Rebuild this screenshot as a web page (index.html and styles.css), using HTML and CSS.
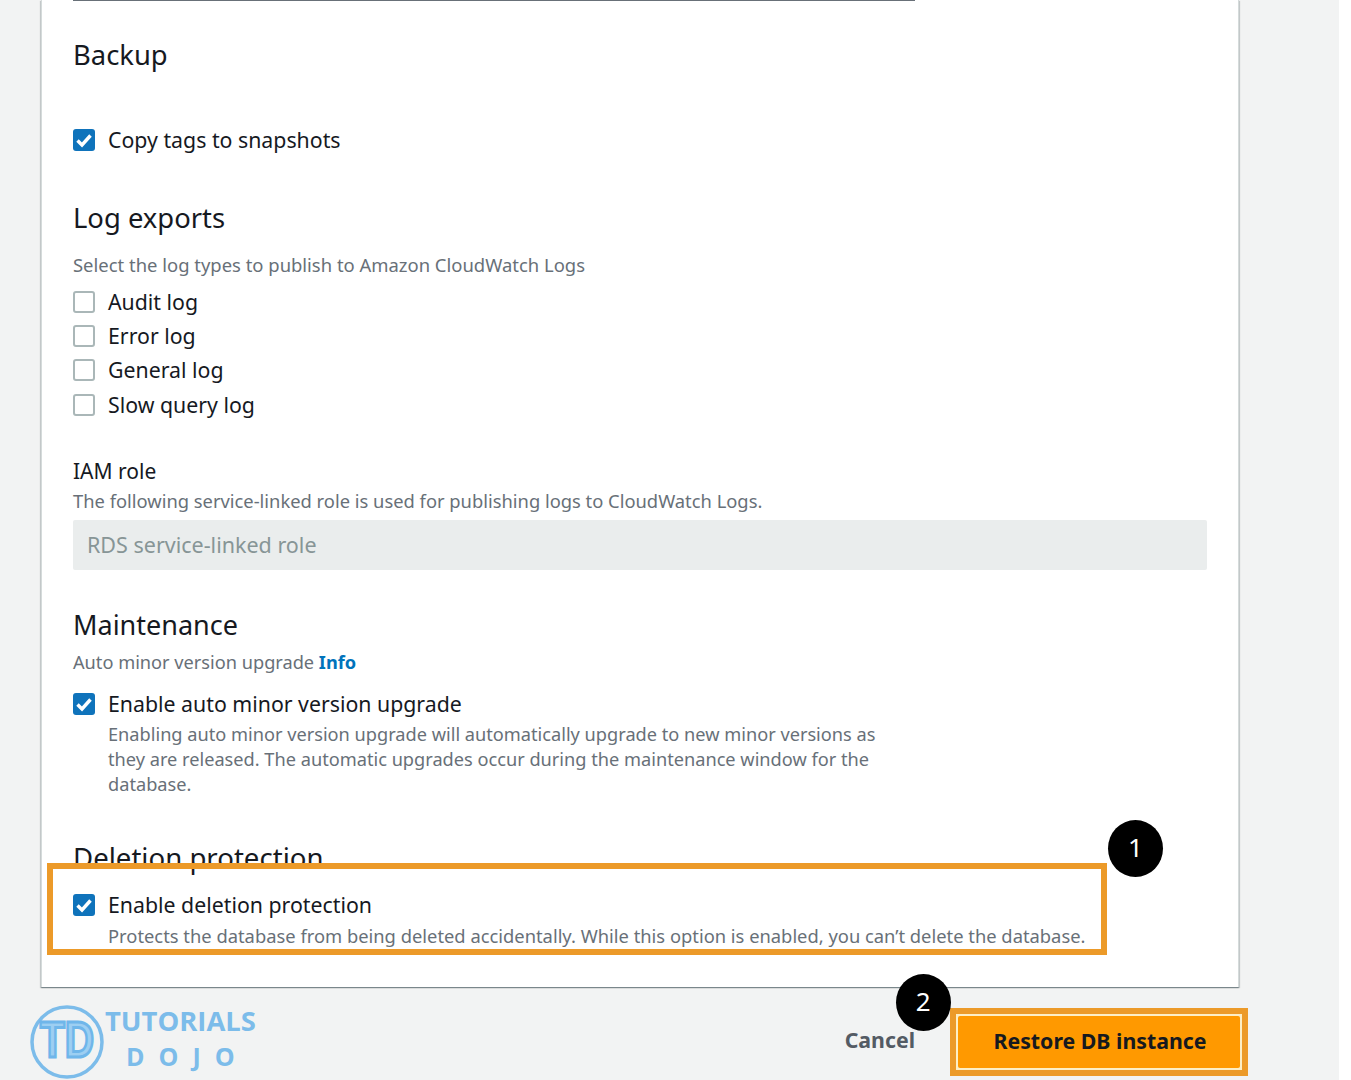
FILE: index.html
```html
<!DOCTYPE html>
<html>
<head>
    <title>Restore DB instance</title>
    <link rel="stylesheet" href="styles.css">
</head>
<body>
    <div class="page">
        <div class="card">
            <div class="top-rule"></div>

            <h2 class="heading heading-backup">Backup</h2>
            <label class="check check-copy">
                <svg class="box" viewBox="0 0 22 22"><rect width="22" height="22" rx="3" fill="#0f73bb"/><path d="M4.5 11.5l4.5 4.5L17.5 6.5" fill="none" stroke="#fff" stroke-width="3.4"/></svg>
                <span>Copy tags to snapshots</span>
            </label>

            <h2 class="heading heading-logs">Log exports</h2>
            <p class="hint hint-logs">Select the log types to publish to Amazon CloudWatch Logs</p>
            <div class="log-list">
                <label class="check"><span class="box empty"></span><span>Audit log</span></label>
                <label class="check"><span class="box empty"></span><span>Error log</span></label>
                <label class="check"><span class="box empty"></span><span>General log</span></label>
                <label class="check"><span class="box empty"></span><span>Slow query log</span></label>
            </div>

            <div class="field-label">IAM role</div>
            <p class="hint hint-role">The following service-linked role is used for publishing logs to CloudWatch Logs.</p>
            <div class="disabled-input">RDS service-linked role</div>

            <h2 class="heading heading-maint">Maintenance</h2>
            <p class="hint hint-maint">Auto minor version upgrade <a class="info" href="#">Info</a></p>
            <label class="check check-auto">
                <svg class="box" viewBox="0 0 22 22"><rect width="22" height="22" rx="3" fill="#0f73bb"/><path d="M4.5 11.5l4.5 4.5L17.5 6.5" fill="none" stroke="#fff" stroke-width="3.4"/></svg>
                <span>Enable auto minor version upgrade</span>
            </label>
            <p class="hint check-note note-auto">Enabling auto minor version upgrade will automatically upgrade to new minor versions as they are released. The automatic upgrades occur during the maintenance window for the database.</p>

            <h2 class="heading heading-delete">Deletion protection</h2>
            <label class="check check-delete">
                <svg class="box" viewBox="0 0 22 22"><rect width="22" height="22" rx="3" fill="#0f73bb"/><path d="M4.5 11.5l4.5 4.5L17.5 6.5" fill="none" stroke="#fff" stroke-width="3.4"/></svg>
                <span>Enable deletion protection</span>
            </label>
            <p class="hint check-note note-delete">Protects the database from being deleted accidentally. While this option is enabled, you can’t delete the database.</p>

            <div class="highlight highlight-delete"></div>
            <div class="step step-one">1</div>
        </div>

        <div class="footer">
            <svg class="logo" width="240" height="79" viewBox="0 0 240 79">
                <circle cx="37" cy="41" r="35" fill="none" stroke="#7cbcea" stroke-width="3.5"/>
                <text class="logo-td" x="37" y="56" text-anchor="middle" textLength="54" lengthAdjust="spacingAndGlyphs">TD</text>
                <text class="logo-top" x="75" y="30">TUTORIALS</text>
                <text class="logo-bottom" x="96" y="65">DOJO</text>
            </svg>
            <div class="actions">
                <a class="cancel" href="#">Cancel</a>
                <div class="restore-wrap">
                    <button class="restore" type="button">Restore DB instance</button>
                </div>
                <div class="step step-two">2</div>
            </div>
        </div>
    </div>
</body>
</html>
```

FILE: styles.css
```css
html, body {
    margin: 0;
    padding: 0;
    background: #fff;
}
body {
    font-family: "Noto Sans", Arial, sans-serif;
    color: #16191f;
    height: 1080px;
    overflow: hidden;
}
.page {
    width: 1339px;
    height: 1080px;
    background: #f2f3f3;
    padding-left: 41px;
    box-sizing: border-box;
}
.card {
    position: relative;
    width: 1198px;
    height: 987px;
    box-sizing: border-box;
    padding: 0 31px;
    background: #fff;
    border-left: 1px solid #d5dbdb;
    border-right: 1px solid #d5dbdb;
    box-shadow: 0 1px 1px 0 rgba(0, 28, 36, .3), 1px 1px 1px 0 rgba(0, 28, 36, .15), -1px 1px 1px 0 rgba(0, 28, 36, .15);
}
.top-rule {
    width: 842px;
    height: 1px;
    background: #687078;
}
.heading {
    margin: 0;
    font-size: 27.4px;
    font-weight: 400;
    line-height: 34px;
    color: #16191f;
}
.heading-backup { margin-top: 37px; }
.heading-logs { margin-top: 44px; }
.heading-maint {
    margin-top: 38px;
    font-size: 27px;
}
.heading-delete {
    margin-top: 43px;
    font-size: 27.6px;
}
.hint {
    margin: 0;
    font-size: 18.35px;
    line-height: 25px;
    color: #687078;
}
.check {
    display: flex;
    align-items: center;
    gap: 13px;
    font-size: 21.3px;
    line-height: 34px;
    height: 34.4px;
    color: #16191f;
}
.box {
    flex: none;
    display: block;
    width: 22px;
    height: 22px;
    box-sizing: border-box;
}
.box.empty {
    background: #fff;
    border: 2px solid #aab7b8;
    border-radius: 3px;
}
.check-copy { margin-top: 51px; }
.hint-logs {
    margin-top: 17px;
    font-size: 18.45px;
}
.log-list { margin-top: 7px; }
.field-label {
    margin-top: 34px;
    font-size: 21px;
    line-height: 30px;
}
.hint-role { margin-top: 2px; }
.disabled-input {
    margin-top: 7px;
    height: 50px;
    padding-left: 14px;
    background: #eaeded;
    border-radius: 2px;
    font-size: 21.5px;
    line-height: 50px;
    color: #879596;
}
.hint-maint {
    margin-top: 8px;
    font-size: 18.2px;
}
.info {
    color: #0073bb;
    font-weight: 700;
    text-decoration: none;
}
.check-auto { margin-top: 12px; }
.check-note {
    margin-left: 35px;
    max-width: 790px;
}
.note-auto {
    margin-top: 1px;
    font-size: 18.2px;
}
.check-delete { margin-top: 13px; }
.note-delete {
    max-width: none;
    margin-top: 1px;
}
.highlight {
    position: absolute;
    box-sizing: border-box;
    border: 6px solid #ec9a29;
}
.highlight-delete {
    left: 5px;
    top: 863px;
    width: 1060px;
    height: 92px;
}
.step {
    position: absolute;
    width: 55px;
    height: 57px;
    border-radius: 50%;
    background: #000;
    color: #fff;
    font-size: 26px;
    line-height: 54px;
    text-align: center;
}
.step-one {
    left: 1066px;
    top: 820px;
}
.footer {
    display: flex;
    justify-content: space-between;
    width: 1218px;
    margin-left: -11px;
    height: 93px;
}
.logo {
    display: block;
    margin-top: 14px;
}
.logo-td {
    font-family: "Liberation Sans", Arial, sans-serif;
    font-size: 50px;
    font-weight: 700;
    fill: #9dcff2;
    stroke: #6fb6ea;
    stroke-width: 3px;
}
.logo-top {
    font-family: "Open Sans", sans-serif;
    font-size: 27.4px;
    font-weight: 700;
    fill: #7cbcea;
}
.logo-bottom {
    font-family: "Open Sans", sans-serif;
    font-size: 25px;
    font-weight: 700;
    fill: #7cbcea;
    letter-spacing: 14px;
}
.actions {
    position: relative;
    display: flex;
    align-items: flex-start;
}
.cancel {
    margin-top: 38px;
    font-size: 21.3px;
    font-weight: 700;
    line-height: 30px;
    color: #545b64;
    text-decoration: none;
}
.restore-wrap {
    margin-top: 21px;
    margin-left: 35px;
    width: 298px;
    height: 68px;
    box-sizing: border-box;
    padding: 2px;
    border: 6px solid #ec9a29;
    background: #fdeec5;
}
.restore {
    display: block;
    width: 100%;
    height: 100%;
    padding: 0 0 4px 2px;
    border: none;
    border-radius: 2px;
    background: #ff9900;
    color: #16191f;
    font-family: inherit;
    font-size: 21.3px;
    font-weight: 700;
}
.step-two {
    left: 51px;
    top: -13px;
}
```
